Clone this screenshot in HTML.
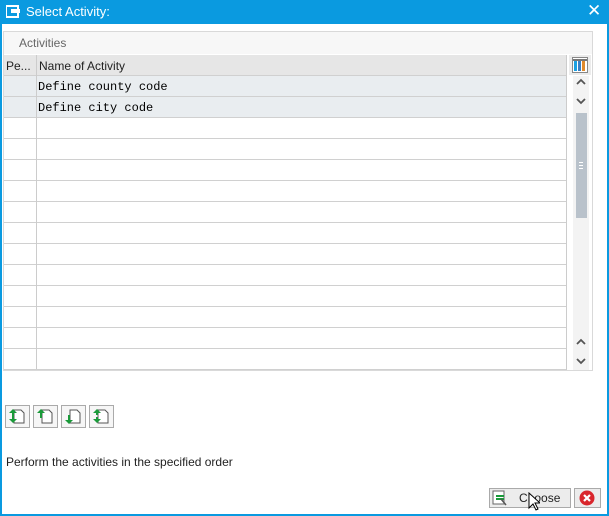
<!DOCTYPE html><html><head><style>
body{margin:0;width:609px;height:516px;position:relative;overflow:hidden;background:#fff;font-family:"Liberation Sans",sans-serif;font-size:12px}
.a{position:absolute}
.mono{font-family:"Liberation Mono",monospace;font-size:12px}
</style></head><body>
<div class="a" style="left:0;top:0;width:609px;height:516px;box-sizing:border-box;border:2px solid #0a9ae0;border-top:0"></div>
<div class="a" style="left:0;top:0;width:609px;height:24px;background:#0a9ae0;color:#fff;font-size:13px">
<svg class="a" style="left:6px;top:5px" width="14" height="13"><rect x="0" y="1" width="12" height="11" fill="none" stroke="#fff" stroke-width="2"/><rect x="5" y="4" width="9" height="4" fill="#fff"/></svg>
<span class="a" style="left:26px;top:4px">Select Activity:</span>
<span class="a" style="left:587px;top:1px;font-size:17px">✕</span></div>
<div class="a" style="left:3px;top:31px;width:590px;height:340px;border:1px solid #d9d9d9;box-sizing:border-box;background:#fff"></div>
<div class="a" style="left:4px;top:32px;width:588px;height:22px;background:#f7f7f7"></div>
<span class="a" style="left:19px;top:36px;color:#666">Activities</span>
<div class="a" style="left:4px;top:55px;width:562px;height:20px;background:#e6e6e6;border-bottom:1px solid #ccc"></div>
<span class="a" style="left:6px;top:59px;color:#222">Pe...</span>
<span class="a" style="left:39px;top:59px;color:#222">Name of Activity</span>
<div class="a" style="left:4px;top:76px;width:562px;height:41px;background:#e9edf0"></div>
<span class="a mono" style="left:38px;top:80px">Define county code</span>
<span class="a mono" style="left:38px;top:101px">Define city code</span>
<div class="a" style="left:4px;top:75px;width:562px;height:294px;background:repeating-linear-gradient(to bottom,#d0d0d0 0,#d0d0d0 1px,transparent 1px,transparent 21px)"></div>
<div class="a" style="left:4px;top:369px;width:562px;height:1px;background:#d0d0d0"></div>
<div class="a" style="left:36px;top:55px;width:1px;height:314px;background:#ccc"></div>
<div class="a" style="left:566px;top:55px;width:1px;height:315px;background:#ccc"></div>
<div class="a" style="left:569px;top:55px;width:22px;height:20px;background:#ececec"></div>
<svg class="a" style="left:572px;top:57px" width="16" height="16"><rect x="0.5" y="0.5" width="15" height="15" fill="#fff" stroke="#888"/><rect x="2" y="4" width="3" height="10" fill="#1ba1e2"/><rect x="6" y="4" width="3" height="10" fill="#3b7fc4"/><rect x="10" y="4" width="3" height="10" fill="#e08a2c"/><rect x="1" y="2" width="14" height="2" fill="#777"/></svg>
<div class="a" style="left:573px;top:76px;width:16px;height:294px;background:#f3f3f3"></div>
<div class="a" style="left:576px;top:113px;width:11px;height:105px;background:#b9c2cb"></div>
<div class="a" style="left:579px;top:162px;width:4px;height:8px;background:repeating-linear-gradient(#fff 0,#fff 1px,transparent 1px,transparent 3px)"></div>
<svg class="a" style="left:575px;top:78px" width="12" height="8"><path d="M2 6l4-4 4 4" stroke="#555" stroke-width="1.8" fill="none"/></svg>
<svg class="a" style="left:575px;top:338px" width="12" height="8"><path d="M2 6l4-4 4 4" stroke="#555" stroke-width="1.8" fill="none"/></svg>
<svg class="a" style="left:575px;top:97px" width="12" height="8"><path d="M2 2l4 4 4-4" stroke="#555" stroke-width="1.8" fill="none"/></svg>
<svg class="a" style="left:575px;top:357px" width="12" height="8"><path d="M2 2l4 4 4-4" stroke="#555" stroke-width="1.8" fill="none"/></svg>
<svg class="a" style="left:5px;top:405px" width="110" height="23">
<g fill="#f6f6f6" stroke="#aaa"><rect x="0.5" y="0.5" width="24" height="22"/><rect x="28.5" y="0.5" width="24" height="22"/><rect x="56.5" y="0.5" width="24" height="22"/><rect x="84.5" y="0.5" width="24" height="22"/></g>
<g fill="#fff" stroke="#555"><path d="M9 5h7l3 3v10h-10z"/><path d="M37 5h7l3 3v10h-10z"/><path d="M65 5h7l3 3v10h-10z"/><path d="M93 5h7l3 3v10h-10z"/></g>
<g fill="#1a9a3a"><path d="M8 4l4 4h-8z M7 8h2v6H7z M4 14h8l-4 4z"/><path d="M36 4l4 4h-8zM35 8h2v5h-2z"/><path d="M63 10h2v5h-2zM60 15h8l-4 4z"/><path d="M92 4l4 4h-8zM91 8h2v2h-2zM91 12h2v2h-2zM88 14h8l-4 4z"/></g></svg>
<span class="a" style="left:6px;top:455px;color:#222">Perform the activities in the specified order</span>
<div class="a" style="left:489px;top:488px;width:82px;height:20px;box-sizing:border-box;border:1px solid #aaa;background:#ececec"></div>
<svg class="a" style="left:492px;top:490px" width="16" height="16"><rect x="1" y="1" width="11" height="13" fill="#fff" stroke="#666"/><path d="M4 6h8M4 9h8" stroke="#1a9a3a" stroke-width="2"/><path d="M9 9l5 6" stroke="#555" stroke-width="1.5"/></svg>
<span class="a" style="left:519px;top:491px;color:#222">Choose</span>
<div class="a" style="left:574px;top:488px;width:27px;height:20px;box-sizing:border-box;border:1px solid #aaa;background:#ececec"></div>
<svg class="a" style="left:579px;top:490px" width="16" height="16"><circle cx="8" cy="8" r="7.5" fill="#d9262c"/><path d="M5 5l6 6M11 5l-6 6" stroke="#fff" stroke-width="2.2"/></svg>
<svg class="a" style="left:528px;top:492px" width="12" height="20"><path d="M1 1v15l4-4 3 6 2-1-3-6h5z" fill="#fff" stroke="#000"/></svg>
</body></html>
